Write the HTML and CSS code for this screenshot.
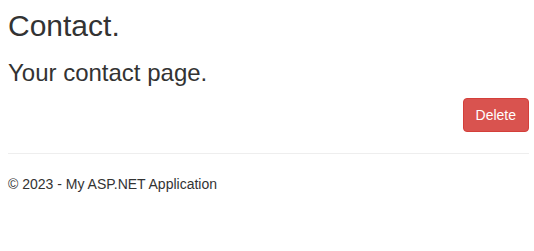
FILE: index.html
```html
<!DOCTYPE html>
<html lang="en">
<head>
<meta charset="utf-8">
<title>Contact - My ASP.NET Application</title>
<link rel="stylesheet" href="styles.css">
</head>
<body>
<div class="page">
  <main class="content">
    <h2 class="title">Contact.</h2>
    <h3 class="subtitle">Your contact page.</h3>
    <div class="actions">
      <button class="btn btn-danger" type="button">Delete</button>
    </div>
  </main>
  <hr class="divider">
  <footer class="footer">
    <p>&copy; 2023 - My ASP.NET Application</p>
  </footer>
</div>
</body>
</html>
```

FILE: styles.css
```css
html, body {
  margin: 0;
  padding: 0;
  background: #fff;
}
body {
  font-family: "Liberation Sans", Arial, Helvetica, sans-serif;
  font-size: 14px;
  line-height: 20px;
  color: #333;
}
.page {
  padding: 9px 5px 0 8px;
}
.title {
  font-size: 30px;
  font-weight: 500;
  line-height: 33px;
  margin: 0 0 18px;
}
.subtitle {
  font-size: 24px;
  font-weight: 500;
  line-height: 26px;
  margin: 0 0 12px;
}
.actions {
  display: flex;
  justify-content: flex-end;
}
.btn {
  font-family: inherit;
  font-size: 14px;
  line-height: 20px;
  padding: 6px 12px;
  border-radius: 4px;
  border: 1px solid transparent;
  cursor: pointer;
}
.btn-danger {
  color: #fff;
  background-color: #d9534f;
  border-color: #d43f3a;
}
.divider {
  margin: 21px 0 20px;
  border: 0;
  border-top: 1px solid #eee;
  height: 0;
}
.footer p {
  margin: 0;
}
```
